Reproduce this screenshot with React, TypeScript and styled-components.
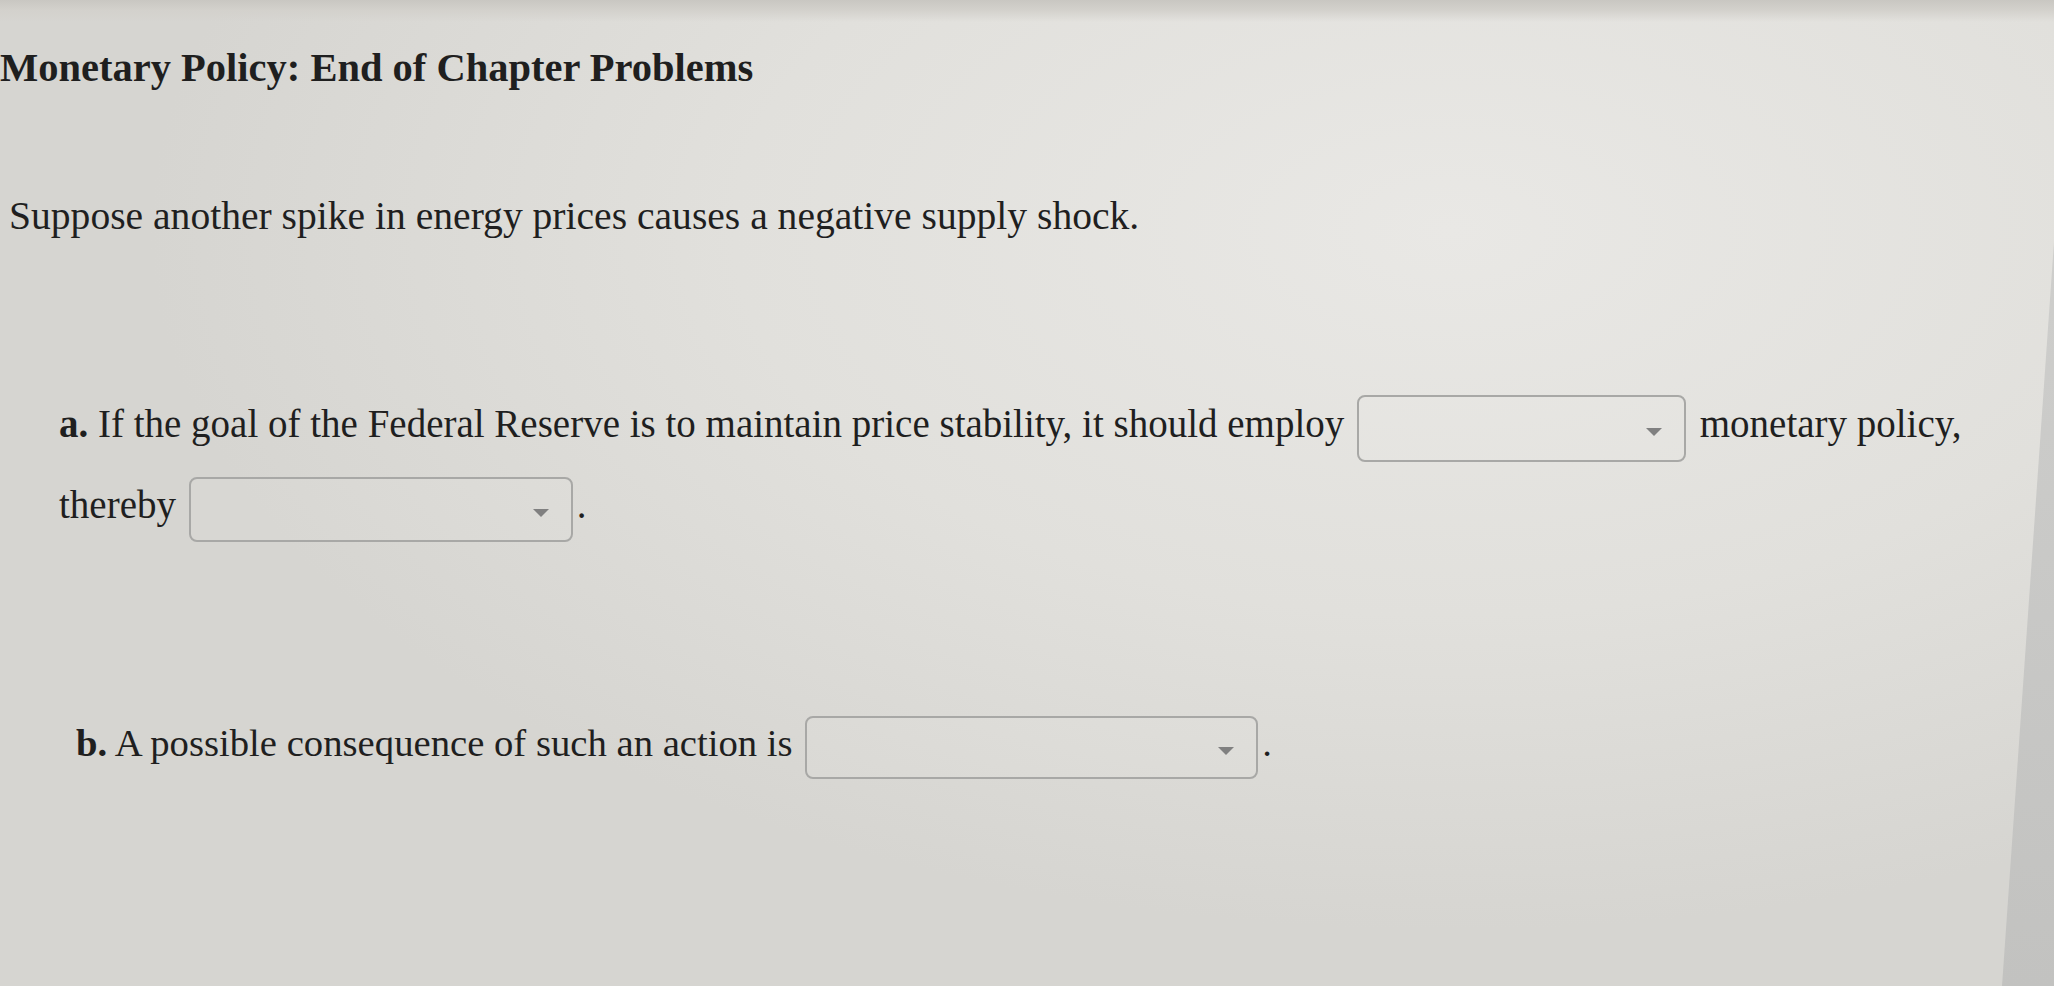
import * as React from 'react';
import styled, { createGlobalStyle } from 'styled-components';

const GlobalStyle = createGlobalStyle`
  html, body {
    margin: 0;
    padding: 0;
    height: 100%;
  }
  body {
    font-family: 'Liberation Serif', 'Times New Roman', serif;
    color: #1f1f1f;
    overflow: hidden;
  }
  #root {
    height: 100%;
  }
`;

const Page = styled.div`
  position: relative;
  height: 100%;
  overflow: hidden;
  background:
    linear-gradient(to bottom, #c9c7c2 0px, #d3d1cc 10px, rgba(211, 209, 204, 0) 22px),
    radial-gradient(ellipse 1300px 700px at 1450px 230px, #e9e8e5 0%, #e1e0dc 55%, #d6d5d1 100%);
`;

// the edge of the monitor bezel showing on the right of the photo
const Bezel = styled.div`
  position: absolute;
  top: 0;
  right: 0;
  width: 54px;
  height: 100%;
  background: linear-gradient(to bottom, #d2d2d0, #c2c2c0);
  clip-path: polygon(100% 242px, 100% 100%, 2px 100%);
`;

const Content = styled.main`
  display: flex;
  flex-direction: column;
  padding-top: 44px;
`;

const Title = styled.h1`
  margin: 0;
  font-size: 40.5px;
  line-height: 48px;
  font-weight: bold;
`;

const Intro = styled.p`
  margin: 100px 0 0;
  padding-left: 9px;
  font-size: 39.6px;
  line-height: 48px;
`;

const Part = styled.p<{ $indent: number; $gap: number; $size: number }>`
  margin: ${(p) => p.$gap}px 0 0;
  padding-left: ${(p) => p.$indent}px;
  width: 1945px;
  font-size: ${(p) => p.$size}px;
  line-height: 81px;
`;

const Label = styled.b`
  font-weight: bold;
`;

const Select = styled.span<{ $w: number; $h: number }>`
  display: inline-flex;
  justify-content: flex-end;
  align-items: center;
  box-sizing: border-box;
  width: ${(p) => p.$w}px;
  height: ${(p) => p.$h}px;
  margin: 0 4px 0 3px;
  padding: 8px 22px 0 0;
  vertical-align: middle;
  border: 2px solid #a8a8a6;
  border-radius: 8px;
  background: rgba(255, 255, 255, 0.06);
`;

const Caret = styled.span`
  width: 0;
  height: 0;
  border-left: 8px solid transparent;
  border-right: 8px solid transparent;
  border-top: 8px solid #808080;
`;

function Dropdown({ w, h }: { w: number; h: number }) {
  return (
    <Select $w={w} $h={h}>
      <Caret />
    </Select>
  );
}

export default function App() {
  return (
    <>
      <GlobalStyle />
      <Page>
        <Bezel />
        <Content>
          <Title>Monetary Policy: End of Chapter Problems</Title>
          <Intro>Suppose another spike in energy prices causes a negative supply shock.</Intro>
          <Part $indent={59} $gap={143} $size={39}>
            <Label>a.</Label> If the goal of the Federal Reserve is to maintain price stability, it should
            employ <Dropdown w={329} h={67} /> monetary policy, thereby <Dropdown w={384} h={65} />.
          </Part>
          <Part $indent={76} $gap={158} $size={38.7}>
            <Label>b.</Label> A possible consequence of such an action is <Dropdown w={453} h={63} />.
          </Part>
        </Content>
      </Page>
    </>
  );
}
